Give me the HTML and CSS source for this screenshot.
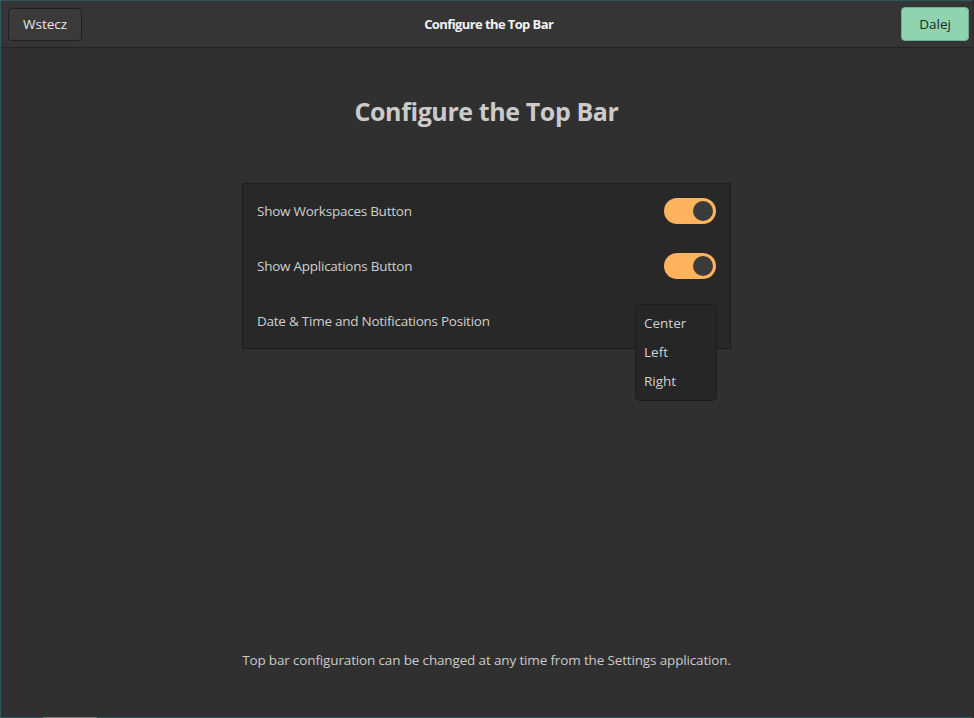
FILE: index.html
```html
<!DOCTYPE html>
<html>
<head>
    <title>Configure the Top Bar</title>
    <link rel="stylesheet" href="styles.css">
</head>
<body>
    <div id="window">
        <div id="headerBar">
            <button class="headerButton text">Wstecz</button>
            <span id="headerTitle" class="text">Configure the Top Bar</span>
            <button class="headerButton text" id="nextButton">Dalej</button>
        </div>
        <div id="content">
            <h1 id="pageTitle" class="text">Configure the Top Bar</h1>
            <div id="settingsList">
                <div class="row">
                    <span class="text rowLabel">Show Workspaces Button</span>
                    <div class="toggle"><div class="knob"></div></div>
                </div>
                <div class="row">
                    <span class="text rowLabel">Show Applications Button</span>
                    <div class="toggle"><div class="knob"></div></div>
                </div>
                <div class="row lastRow">
                    <span class="text rowLabel">Date &amp; Time and Notifications Position</span>
                    <div id="popover">
                        <div class="popItem text">Center</div>
                        <div class="popItem text">Left</div>
                        <div class="popItem text">Right</div>
                    </div>
                </div>
            </div>
            <div id="spacer"></div>
            <p id="footNote" class="text">Top bar configuration can be changed at any time from the Settings application.</p>
        </div>
        <div id="bottomTab"></div>
    </div>
</body>
</html>
```

FILE: styles.css
```css
body{
    margin: 0px;
    background-color: #303030;
}

.text{
    font-family: "Open Sans", "Noto Sans", sans-serif;
    color: #d0d0d0;
}

#window{
    position: relative;
    display: flex;
    flex-direction: column;
    box-sizing: border-box;
    height: 718px;
    width: 972px;
    background-color: #303030;
    border-top: 1px solid #2a5a60;
    border-left: 1px solid #2a5a60;
    border-bottom: 1px solid #2a5a60;
}

#headerBar{
    display: flex;
    flex-direction: row;
    justify-content: space-between;
    align-items: center;
    height: 46px;
    padding: 0px 3px 0px 7px;
    background-color: #353535;
    border-bottom: 1px solid #232323;
}

.headerButton{
    height: 33px;
    padding: 0px 14px;
    font-size: 13.5px;
    color: #e8e8e8;
    background-color: #3a3a3a;
    border: 1px solid #1f1f1f;
    border-radius: 4px;
}

#nextButton{
    height: 34px;
    padding: 0px 17px;
    color: #1e2a24;
    background-color: #8fd3b0;
    border: 1px solid #6fae8f;
}

#headerTitle{
    margin-right: 6px;
    font-size: 13px;
    font-weight: bold;
    color: #f2f2f2;
    letter-spacing: -0.6px;
}

#content{
    display: flex;
    flex-direction: column;
    align-items: center;
    flex: 1;
}

#pageTitle{
    margin: 46px 0px 0px 0px;
    font-size: 25px;
    font-weight: bold;
    color: #cbcbcb;
    letter-spacing: -0.4px;
}

#settingsList{
    width: 487px;
    margin-top: 55px;
    background-color: #282828;
    border: 1px solid #1d1d1d;
}

.row{
    position: relative;
    display: flex;
    flex-direction: row;
    justify-content: space-between;
    align-items: center;
    height: 54px;
    padding: 0px 14px;
    border-bottom: 1px solid #232323;
}

.lastRow{
    border-bottom: none;
}

.rowLabel{
    font-size: 13.5px;
    color: #cfcfcf;
    letter-spacing: -0.25px;
}

.toggle{
    display: flex;
    justify-content: flex-end;
    align-items: center;
    width: 52px;
    height: 26px;
    padding: 0px 3px;
    box-sizing: border-box;
    background-color: #ffb35c;
    border-radius: 13px;
}

.knob{
    width: 20px;
    height: 20px;
    background-color: #3b3b3b;
    border-radius: 10px;
}

#popover{
    position: absolute;
    right: 13px;
    top: 10px;
    width: 80px;
    padding: 4px 0px 4px 0px;
    background-color: #262626;
    border: 1px solid #1c1c1c;
    border-radius: 5px;
}

.popItem{
    height: 29px;
    line-height: 29px;
    padding-left: 8px;
    font-size: 13.5px;
    color: #d0d0d0;
}

#spacer{
    flex: 1;
}

#footNote{
    margin: 0px 0px 48px 0px;
    font-size: 13.5px;
    color: #cacaca;
    letter-spacing: -0.15px;
}

#bottomTab{
    position: absolute;
    left: 42px;
    bottom: -1px;
    width: 54px;
    height: 1px;
    background-color: #777777;
}
```
